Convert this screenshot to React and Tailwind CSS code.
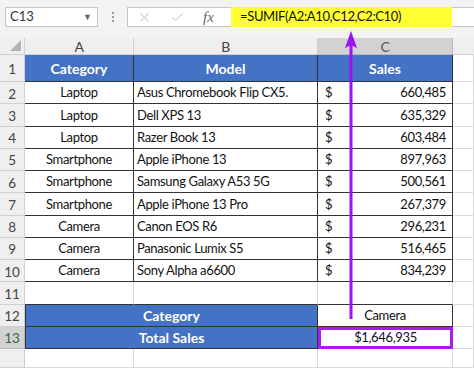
import { X, Check } from "lucide-react"

// sample sheet data
const rows = [
  ["Laptop", "Asus Chromebook Flip CX5.", "660,485"],
  ["Laptop", "Dell XPS 13", "635,329"],
  ["Laptop", "Razer Book 13", "603,484"],
  ["Smartphone", "Apple iPhone 13", "897,963"],
  ["Smartphone", "Samsung Galaxy A53 5G", "500,561"],
  ["Smartphone", "Apple iPhone 13 Pro", "267,379"],
  ["Camera", "Canon EOS R6", "296,231"],
  ["Camera", "Panasonic Lumix S5", "516,465"],
  ["Camera", "Sony Alpha a6600", "834,239"],
]

const RowHead = ({ n, selected }) => (
  <div
    className={
      "flex items-center justify-center pt-[2px] border-r border-b text-[13.5px] tracking-[-0.2px] " +
      (selected
        ? "bg-[#d2d2d2] border-[#b8b8b8] text-[#2f6b45]"
        : "bg-[#efefef] border-[#d0d0d0] text-[#444]")
    }
  >
    {n}
  </div>
)

const Blank = ({ dark }) => (
  <div className={"bg-white border-r border-b border-r-[#dadada] " + (dark ? "border-b-[#333]" : "border-b-[#dadada]")} />
)

const App = () => {
  return (
    <div className="relative w-[474px] h-[368px] overflow-hidden bg-white font-['Lato',sans-serif] text-[#111]">
      {/* formula bar */}
      <div className="h-[38px] bg-[#f3f3f3] flex items-start pt-[7px] pl-[5px]">
        <div className="w-[93px] h-[20px] bg-white border border-[#c6c6c6] flex items-center justify-between pl-[4px] pr-[5px] text-[13px] text-[#333]">
          <span>C13</span>
          <span className="text-[9px] text-[#666]">▼</span>
        </div>
        <div className="w-[29px] h-[20px] flex flex-col items-center justify-center gap-[2px]">
          <span className="w-[2px] h-[2px] bg-[#999]" />
          <span className="w-[2px] h-[2px] bg-[#999]" />
          <span className="w-[2px] h-[2px] bg-[#999]" />
        </div>
        <div className="flex-1 h-[20px] bg-white border-y border-l border-[#c6c6c6] flex items-center">
          <div className="w-[103px] flex items-center justify-around text-[#bbb] pr-[8px]">
            <X size={15} strokeWidth={1.6} />
            <Check size={15} strokeWidth={1.6} />
            <span className="font-['Liberation_Serif',serif] italic text-[15px] text-[#666]">fx</span>
          </div>
          <div className="w-[221px] h-[20px] bg-[#ffff33] flex items-center pl-[9px] text-[13px] tracking-[-0.35px] text-[#111]">
            =SUMIF(A2:A10,C12,C2:C10)
          </div>
        </div>
      </div>

      {/* sheet grid */}
      <div className="grid grid-cols-[25px_109px_184px_135px_21px] grid-rows-[17px_27px_repeat(12,22.25px)_19px] text-[13px] tracking-[-0.35px]">
        {/* column headers */}
        <div className="relative bg-[#efefef] border-r border-b border-[#d0d0d0]">
          <div className="absolute right-[3px] bottom-[3px] w-0 h-0 border-l-[11px] border-l-transparent border-b-[11px] border-b-[#b5b5b5]" />
        </div>
        <div className="flex items-center justify-center bg-[#efefef] border-r border-b border-[#d0d0d0] text-[14px] text-[#444]">A</div>
        <div className="flex items-center justify-center bg-[#efefef] border-r border-b border-[#d0d0d0] text-[14px] text-[#444]">B</div>
        <div className="flex items-center justify-center bg-[#d2d2d2] border-r border-b border-[#b8b8b8] text-[14px] text-[#555]">C</div>
        <div className="bg-[#efefef] border-b border-[#d0d0d0]" />

        {/* row 1 */}
        <RowHead n={1} />
        <div className="flex items-center justify-center bg-[#4472c4] border-r border-b border-[#333] text-white font-bold text-[14px] tracking-normal">Category</div>
        <div className="flex items-center justify-center bg-[#4472c4] border-r border-b border-[#333] text-white font-bold text-[14px] tracking-normal">Model</div>
        <div className="flex items-center justify-center bg-[#4472c4] border-r border-b border-[#333] text-white font-bold text-[14px] tracking-normal">Sales</div>
        <Blank />

        {rows.map((r, i) => (
          <>
            <RowHead key={"h" + i} n={i + 2} />
            <div key={"a" + i} className="flex items-center justify-center pt-[1px] border-r border-b border-[#333]">{r[0]}</div>
            <div key={"b" + i} className="flex items-center pl-[3px] pt-[1px] border-r border-b border-[#333] whitespace-nowrap">{r[1]}</div>
            <div key={"c" + i} className="flex items-center justify-between pl-[7px] pr-[6px] pt-[1px] border-r border-b border-[#333]">
              <span>$</span>
              <span>{r[2]}</span>
            </div>
            <Blank key={"d" + i} />
          </>
        ))}

        {/* row 11 */}
        <RowHead n={11} />
        <Blank dark />
        <Blank dark />
        <Blank dark />
        <Blank />

        {/* row 12 */}
        <RowHead n={12} />
        <div className="col-span-2 flex items-center justify-center bg-[#4472c4] border-l border-r border-b border-[#333] text-white font-bold text-[14px] tracking-normal">Category</div>
        <div className="flex items-center justify-center pt-[1px] border-r border-b border-[#333]">Camera</div>
        <Blank />

        {/* row 13 */}
        <RowHead n={13} selected />
        <div className="col-span-2 flex items-center justify-center bg-[#4472c4] border-l border-r border-b border-[#333] text-white font-bold text-[14px] tracking-normal">Total Sales</div>
        <div className="flex items-center justify-center border-[3px] border-[#a41df2]">$1,646,935</div>
        <Blank />

        {/* row 14 */}
        <RowHead n="" />
        <Blank />
        <Blank />
        <Blank />
        <Blank />
      </div>

      {/* arrow overlay */}
      <svg className="absolute left-0 top-0 pointer-events-none" width="474" height="368">
        <line x1="351" y1="42" x2="351" y2="319" stroke="#9e10f5" strokeWidth="3" />
        <polygon points="351,31 345,48 351,45 357,48" fill="#9e10f5" />
      </svg>
    </div>
  )
}

export default App
